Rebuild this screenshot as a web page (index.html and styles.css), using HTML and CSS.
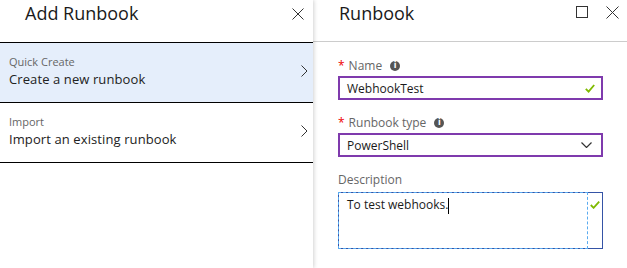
FILE: index.html
```html
<!DOCTYPE html>
<html>
<head>
<meta charset="utf-8">
<link rel="stylesheet" href="styles.css">
</head>
<body>
<div class="page">
  <section class="blade left">
    <header class="blade-head left-head">
      <h1 class="title">Add Runbook</h1>
      <span class="close close-left">
        <svg width="12" height="12" viewBox="0 0 12 12"><path d="M0.5 0.5L11.5 11.5M11.5 0.5L0.5 11.5" stroke="#333" stroke-width="1" fill="none"/></svg>
      </span>
    </header>
    <div class="item selected">
      <div class="item-text">
        <div class="item-sub">Quick Create</div>
        <div class="item-main">Create a new runbook</div>
      </div>
      <svg class="chev" width="7" height="12" viewBox="0 0 7 12"><path d="M0.5 0.5L6 6L0.5 11.5" stroke="#333" stroke-width="1" fill="none"/></svg>
    </div>
    <div class="item">
      <div class="item-text">
        <div class="item-sub">Import</div>
        <div class="item-main">Import an existing runbook</div>
      </div>
      <svg class="chev" width="7" height="12" viewBox="0 0 7 12"><path d="M0.5 0.5L6 6L0.5 11.5" stroke="#333" stroke-width="1" fill="none"/></svg>
    </div>
  </section>
  <section class="blade right">
    <header class="blade-head right-head">
      <h1 class="title">Runbook</h1>
      <div class="head-actions">
        <svg width="12" height="12" viewBox="0 0 12 12"><rect x="0.5" y="0.5" width="11" height="11" stroke="#333" stroke-width="1" fill="none"/></svg>
        <svg width="13" height="13" viewBox="0 0 13 13"><path d="M0.5 0.5L12.5 12.5M12.5 0.5L0.5 12.5" stroke="#333" stroke-width="1" fill="none"/></svg>
      </div>
    </header>
    <div class="form">
      <div class="field">
        <label class="label"><span class="req">*</span> Name <span class="info">i</span></label>
        <div class="box valid">
          <span class="value">WebhookTest</span>
          <svg class="check" width="10" height="9" viewBox="0 0 10 9"><path d="M0.8 4.8L3.6 7.6L9.2 1" stroke="#7fba00" stroke-width="1.8" fill="none"/></svg>
        </div>
      </div>
      <div class="field">
        <label class="label"><span class="req">*</span> Runbook type <span class="info">i</span></label>
        <div class="box valid">
          <span class="value">PowerShell</span>
          <svg class="caret" width="11" height="6" viewBox="0 0 11 6"><path d="M0.5 0.5L5.5 5.5L10.5 0.5" stroke="#333" stroke-width="1.2" fill="none"/></svg>
        </div>
      </div>
      <div class="field field-desc">
        <label class="label plain">Description</label>
        <div class="area">
          <div class="area-input"><span class="value">To test webhooks.</span><span class="cursor"></span></div>
          <div class="area-side">
            <svg class="check" width="10" height="8" viewBox="0 0 10 8"><path d="M0.8 4L3.6 6.8L9.2 0.6" stroke="#7fba00" stroke-width="1.8" fill="none"/></svg>
          </div>
        </div>
      </div>
    </div>
  </section>
</div>
</body>
</html>
```

FILE: styles.css
```css
html, body {
  margin: 0;
  padding: 0;
  background: #fff;
}
body {
  width: 627px;
  height: 268px;
  overflow: hidden;
  font-family: "Open Sans", "Noto Sans", sans-serif;
  color: #1e1e1e;
}
.page {
  display: flex;
  height: 268px;
}
.blade {
  height: 268px;
  background: #fff;
}
.left {
  width: 313px;
  flex: none;
  position: relative;
  z-index: 1;
  box-shadow: 1px 0 4px rgba(0,0,0,0.18);
}
.right {
  flex: 1;
}
.blade-head {
  display: flex;
  align-items: flex-start;
  justify-content: space-between;
  box-sizing: border-box;
}
.left-head {
  height: 43px;
  border-bottom: 1px solid #000;
  padding: 0 9px 0 25px;
}
.right-head {
  height: 42px;
  border-bottom: 1px solid #ccc;
  padding: 0 8px 0 26px;
}
.title {
  margin: 0;
  font-size: 18px;
  font-weight: 400;
  line-height: 26px;
  color: #1a1a1a;
}
.close-left {
  margin-top: 8px;
  display: flex;
}
.head-actions {
  display: flex;
  gap: 18px;
  margin-top: 6px;
  align-items: flex-start;
}
.item {
  display: flex;
  align-items: center;
  justify-content: space-between;
  height: 60px;
  box-sizing: border-box;
  border-bottom: 1px solid #000;
  padding: 0 5px 0 9px;
}
.item.selected {
  background: #e5eefb;
}
.item-sub {
  font-size: 11px;
  color: #666;
  line-height: 16px;
}
.item-main {
  font-size: 13px;
  color: #222;
  line-height: 19px;
  letter-spacing: 0.1px;
}
.item-text {
  margin-top: -3px;
}
.chev {
  margin-top: -3px;
}
.form {
  padding: 15px 24px 0 25px;
  display: flex;
  flex-direction: column;
  gap: 14px;
}
.field {
  display: flex;
  flex-direction: column;
  gap: 1px;
}
.field-desc {
  gap: 3px;
}
.label {
  font-size: 12px;
  color: #666;
  line-height: 18px;
  display: flex;
  align-items: center;
}
.req {
  color: #e00;
  font-size: 12px;
  margin-right: 4px;
}
.info {
  display: inline-flex;
  align-items: center;
  justify-content: center;
  width: 10px;
  height: 10px;
  border-radius: 50%;
  background: #555;
  color: #fff;
  font-size: 8px;
  font-weight: 700;
  line-height: 10px;
  margin-left: 8px;
  font-family: "DejaVu Sans", sans-serif;
}
.box {
  height: 24px;
  box-sizing: border-box;
  border: 2px solid #7f3aad;
  display: flex;
  align-items: center;
  justify-content: space-between;
  padding: 0 6px 0 7px;
}
.value {
  font-size: 12px;
  color: #1a1a1a;
}
.caret {
  margin-right: 3px;
}
.area {
  height: 57px;
  box-sizing: border-box;
  border: 1px solid #3553a6;
  display: flex;
}
.area-input {
  width: 250px;
  margin: -1px 0 -1px -1px;
  border: 1px dashed #5aabf0;
  box-sizing: border-box;
  padding: 3px 8px;
  display: flex;
  align-items: flex-start;
}
.area-input .value {
  line-height: 18px;
}
.cursor {
  display: inline-block;
  width: 1px;
  height: 16px;
  background: #000;
  margin-top: 2px;
}
.area-side {
  flex: 1;
  display: flex;
  justify-content: center;
  padding-top: 8px;
}
```
